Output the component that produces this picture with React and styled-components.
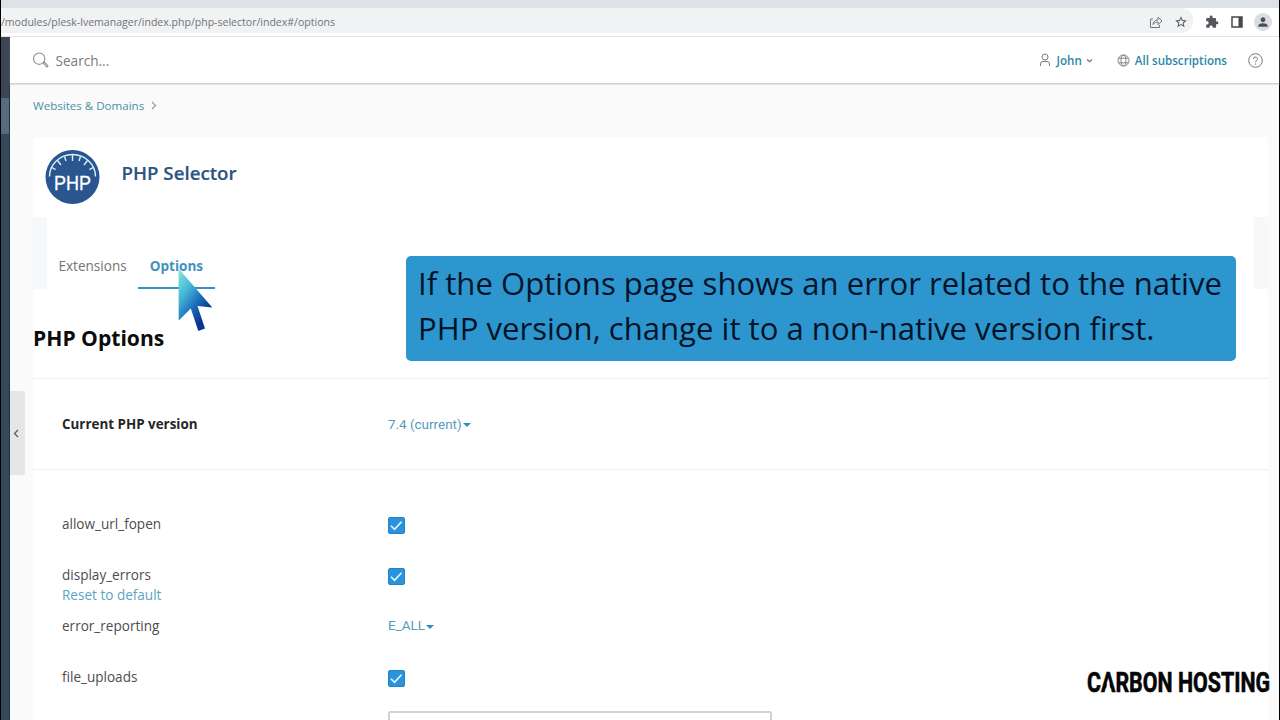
import { useState } from "react";
import styled, { createGlobalStyle } from "styled-components";
import { MdExtension, MdPerson, MdStarBorder } from "react-icons/md";

const GlobalStyle = createGlobalStyle`
  * {
    box-sizing: border-box;
  }
  body {
    margin: 0;
    background-color: #000;
    font-family: "Open Sans", "Noto Sans", sans-serif;
  }
`

const Screen = styled.div`
  position: relative;
  width: 1280px;
  height: 720px;
  padding: 0 1px;
  overflow: hidden;
  display: flex;
  flex-direction: column;
  background-color: #000;
`

const TabStrip = styled.div`
  height: 8px;
  background-color: #dee1e6;
`

const BrowserBar = styled.div`
  height: 29px;
  display: flex;
  align-items: flex-start;
  background-color: #fff;
  border-bottom: 1px solid #e4e5e7;
  color: #54575b;
`

const AddressBar = styled.div`
  width: 1192px;
  height: 25px;
  padding-top: 3px;
  display: flex;
  align-items: center;
  background-color: #f0f2f3;
  border-radius: 0 12px 12px 0;
  & > span {
    flex: 1;
    font-size: 10.54px;
    line-height: 20px;
    color: #707276;
  }
`

const BarIcon = styled.div`
  width: ${props => props.$width || 25}px;
  height: 28px;
  display: flex;
  align-items: center;
  justify-content: center;
`

const Avatar = styled.div`
  width: 18px;
  height: 18px;
  margin: 5px 0 0 10px;
  border-radius: 50%;
  display: flex;
  align-items: center;
  justify-content: center;
  background-color: #dadde3;
  color: #4a4e5c;
`

const Body = styled.div`
  flex: 1;
  min-height: 0;
  display: flex;
`

const Sidebar = styled.div`
  width: 9px;
  display: flex;
  flex-direction: column;
  background-color: #34495c;
  border-right: 1px solid #26323f;
`

const SidebarBlock = styled.div`
  height: ${props => props.$height}px;
  background-color: ${props => props.$color};
`

const Main = styled.div`
  flex: 1;
  min-width: 0;
  display: flex;
  flex-direction: column;
  background-color: #fafafa;
`

const TopBar = styled.div`
  height: 47px;
  flex: none;
  padding: 0 16px 0 23px;
  display: flex;
  align-items: center;
  background-color: #fff;
  border-bottom: 1px solid #d2d2d2;
  box-shadow: 0 1px 1px #e4e4e4;
  svg {
    display: block;
  }
`

const SearchText = styled.span`
  flex: 1;
  margin-left: 5.5px;
  font-size: 13.6px;
  color: #7b7b7b;
`

const TopLink = styled.a`
  margin: 0 ${props => props.$right}px 0 ${props => props.$left}px;
  font-size: 11.6px;
  font-weight: 600;
  color: #2a86a4;
`

const MenuGap = styled.span`
  width: 24px;
`

const Breadcrumb = styled.div`
  height: 53px;
  flex: none;
  padding: 0 0 10px 23px;
  display: flex;
  align-items: center;
  gap: 7px;
  font-size: 11.57px;
  color: #4a91a5;
`

const Card = styled.div`
  flex: 1;
  margin: 0 11px 0 23px;
  background-color: #fff;
`

const TitleRow = styled.div`
  height: 80px;
  padding: 13px 0 0 12px;
  display: flex;
  gap: 21.5px;
`

const Title = styled.h1`
  margin: 9px 0 0;
  font-size: 18.7px;
  line-height: 28px;
  font-weight: 600;
  color: #2b557f;
  -webkit-text-stroke: 0.2px #2b557f;
`

const Tabs = styled.div`
  height: 72px;
  padding: 0 14px;
  display: flex;
  align-items: flex-end;
  background: linear-gradient(#f6f8fa, #f6f8fa) left / 14px 100% no-repeat,
    linear-gradient(#f6f8fa, #f6f8fa) right / 14px 100% no-repeat;
`

const Tab = styled.div`
  height: 34px;
  padding: 0 11.5px;
  font-size: 13.55px;
  line-height: 23px;
  font-weight: ${props => props.$active ? 700 : 400};
  color: ${props => props.$active ? "#4390bf" : "#747474"};
  border-bottom: 2px solid ${props => props.$active ? "#3c8ebf" : "transparent"};
`

const SectionTitle = styled.h2`
  height: 90px;
  margin: 0;
  padding-top: 34px;
  font-size: 21.1px;
  line-height: 30px;
  font-weight: 700;
  color: #0c0c0c;
  border-bottom: 1px solid #f1f1f1;
`

const VersionRow = styled.div`
  height: 91px;
  padding-left: 29px;
  display: flex;
  align-items: center;
  border-bottom: 1px solid #f1f1f1;
`

const VersionLabel = styled.div`
  width: 326px;
  font-size: 13.4px;
  font-weight: 700;
  color: #262626;
`

const Select = styled.div`
  display: flex;
  align-items: center;
  gap: 1.5px;
  font-family: Roboto, sans-serif;
  font-size: 13.45px;
  line-height: 19px;
  color: #559bbd;
  &::after {
    content: "";
    border: 4px solid transparent;
    border-top-color: #348fc0;
    border-bottom: 0;
    margin-top: 2px;
  }
`

const OptionList = styled.div`
  padding: 37px 0 0 29px;
`

const OptionRow = styled.div`
  height: 51px;
  padding-top: 7px;
  display: flex;
  align-items: flex-start;
`

const OptionLabel = styled.div`
  width: 326px;
  font-size: 13.55px;
  line-height: 20px;
  color: #4d4d4d;
  & > a {
    display: block;
    color: #5ba5bf;
  }
`

const Check = styled.button`
  width: 17px;
  height: 17px;
  margin-top: 3px;
  padding: 0;
  border: 1px solid #2483c8;
  border-radius: 2px;
  background-color: ${props => props.$on ? "#2b93dc" : "#fff"};
  svg {
    display: block;
  }
`

const TextInp = styled.input`
  width: 384px;
  height: 34px;
  margin: -7px 0 0 326px;
  border: 2px solid #d2d2d2;
  border-radius: 2px;
  outline: none;
`

const Handle = styled.div`
  position: absolute;
  left: 10px;
  top: 391px;
  width: 15px;
  height: 84px;
  padding-right: 3px;
  display: flex;
  align-items: center;
  justify-content: center;
  background-color: #e6e6e6;
  border-radius: 0 2px 2px 0;
`

const Callout = styled.div`
  position: absolute;
  left: 406px;
  top: 256px;
  width: 830px;
  height: 105px;
  padding: 5px 0 0 12px;
  border-radius: 5px;
  background-color: #2d96cf;
  font-size: 31.12px;
  line-height: 44.5px;
  color: #031429;
  white-space: nowrap;
`

const Pointer = styled.svg`
  position: absolute;
  left: 176px;
  top: 266px;
`

const Brand = styled.div`
  position: absolute;
  left: 1087px;
  top: 666px;
  font-family: Roboto, sans-serif;
  font-size: 28px;
  line-height: 33px;
  font-weight: 700;
  color: #050505;
  -webkit-text-stroke: 0.6px #050505;
  white-space: nowrap;
  transform: scaleX(0.764);
  transform-origin: left;
`

// the wordmark's A has no crossbar, so the inside of the letter is filled in
const OpenA = styled.span`
  position: relative;
  &::after {
    content: "";
    position: absolute;
    left: 4.9px;
    bottom: 5px;
    width: 9.2px;
    height: 15px;
    background-color: #fff;
    clip-path: polygon(50% 0, 100% 100%, 0 100%);
  }
`

const options = [
  { name: "allow_url_fopen", type: "check" },
  { name: "display_errors", type: "check", reset: true },
  { name: "error_reporting", type: "select", value: "E_ALL" },
  { name: "file_uploads", type: "check" },
]

const PhpLogo = () => (
  <svg width="55" height="55" viewBox="0 0 55 55">
    <circle cx="27.500" cy="27" r="27" fill="#29568f" />
    <g fill="none" stroke="#d9f0fa" strokeWidth="1.400">
      <path d="M4.500 26.500a23 22 0 0 1 46 0" />
      <path d="M6.800 17.500l3.800 2.200M12.500 10.500l3.500 4.500M19.500 6.500l1.500 4.500M27.500 5v6M35.500 6.500l-1.500 4.500M42.500 10.500l-3.500 4.500M48.200 17.500l-3.800 2.200" />
    </g>
    <text x="27.500" y="40" textAnchor="middle" fontFamily="Liberation Sans, sans-serif" fontSize="20.500"
      textLength="37" lengthAdjust="spacingAndGlyphs" fill="#fff" stroke="#fff" strokeWidth="0.300">PHP</text>
  </svg>
)

const Chevron = ({ d, w, h, color }) => (
  <svg width={w} height={h} fill="none" stroke={color} strokeWidth="1.200">
    <path d={d} />
  </svg>
)

function OptionControl({ option }) {
  const [on, setOn] = useState(true)

  if (option.type === "select") return <Select>{option.value}</Select>
  return (
    <Check $on={on} onClick={() => setOn(!on)}>
      {on && (
        <svg width="15" height="15" fill="none" stroke="#e6fbff" strokeWidth="1.600">
          <path d="M2 7.800l3.500 3.500 7-7.500" />
        </svg>
      )}
    </Check>
  )
}

export default function App() {
  return (
    <>
      <GlobalStyle />
      <Screen>
        <TabStrip />
        <BrowserBar>
          <AddressBar>
            <span>/modules/plesk-lvemanager/index.php/php-selector/index#/options</span>
            <BarIcon>
              <svg width="14" height="14" fill="none" stroke="#73777b" strokeWidth="1">
                <path d="M4 4H1.500v8.500h9V10" />
                <path d="M4 9.500c.3-3 2-4.500 5-4.500V2.200L13 6 9 9.600V7C7 7 5.300 7.700 4 9.500z" />
              </svg>
            </BarIcon>
            <BarIcon><MdStarBorder size={14} /></BarIcon>
          </AddressBar>
          <BarIcon $width={37}><MdExtension size={14} /></BarIcon>
          <BarIcon $width={14}>
            <svg width="12" height="12">
              <path d="M1 1h10v10H1z" fill="none" stroke="#45484c" strokeWidth="1.500" />
              <path d="M7.500 1H11v10H7.500z" fill="#45484c" />
            </svg>
          </BarIcon>
          <Avatar><MdPerson size={14} /></Avatar>
        </BrowserBar>
        <Body>
          <Sidebar>
            <SidebarBlock $height={61} $color="#3d4655" />
            <SidebarBlock $height={36} $color="#566a80" />
          </Sidebar>
          <Main>
            <TopBar>
              <svg width="17" height="17" fill="none" stroke="#909090" strokeWidth="1.100">
                <circle cx="6.200" cy="6.700" r="5.700" />
                <path d="M10.200 11l1-1 3.600 3.600a.9.9 0 0 1-1.200 1.200z" />
              </svg>
              <SearchText>Search...</SearchText>
              <svg width="12" height="14" fill="none" stroke="#7d7d7d" strokeWidth="1">
                <circle cx="6" cy="4" r="3" />
                <path d="M1.500 13v-2q0-2.500 2.500-2.500h4q2.500 0 2.500 2.500v2" />
              </svg>
              <TopLink $left={6} $right={4}>John</TopLink>
              <Chevron d="M1 1.500l2.500 2.300 2.500-2.300" w={7} h={5} color="#777" />
              <MenuGap />
              <svg width="13" height="13" fill="none" stroke="#777" strokeWidth="0.900">
                <circle cx="6.500" cy="6.500" r="5.500" />
                <ellipse cx="6.500" cy="6.500" rx="2.500" ry="5.500" />
                <path d="M1.800 4.200h9.400M1.800 8.800h9.400" />
              </svg>
              <TopLink $left={5} $right={21}>All subscriptions</TopLink>
              <svg width="15" height="15" fill="none" stroke="#777">
                <circle cx="7.500" cy="7.500" r="6.800" />
                <path d="M5.500 6a2 2 0 1 1 3 1.700q-1 .6-1 1.500M7.500 10.400v1.200" />
              </svg>
            </TopBar>
            <Breadcrumb>
              Websites &amp; Domains
              <Chevron d="M1 1l3.500 3.500L1 8" w={6} h={9} color="#999" />
            </Breadcrumb>
            <Card>
              <TitleRow>
                <PhpLogo />
                <Title>PHP Selector</Title>
              </TitleRow>
              <Tabs>
                <Tab>Extensions</Tab>
                <Tab $active>Options</Tab>
              </Tabs>
              <SectionTitle>PHP Options</SectionTitle>
              <VersionRow>
                <VersionLabel>Current PHP version</VersionLabel>
                <Select>7.4 (current)</Select>
              </VersionRow>
              <OptionList>
                {options.map(option => (
                  <OptionRow key={option.name}>
                    <OptionLabel>
                      {option.name}
                      {option.reset && <a>Reset to default</a>}
                    </OptionLabel>
                    <OptionControl option={option} />
                  </OptionRow>
                ))}
                <OptionRow>
                  <TextInp type="text" />
                </OptionRow>
              </OptionList>
            </Card>
          </Main>
        </Body>
        <Handle><Chevron d="M5 1L1.500 4.500 5 8" w={6} h={9} color="#555" /></Handle>
        <Callout>
          If the Options page shows an error related to the native<br />
          PHP version, change it to a non-native version first.
        </Callout>
        <Pointer width="40" height="68">
          <defs>
            <linearGradient id="pointer" x1="0" y1="0" x2="0.750" y2="1">
              <stop offset="0" stopColor="#8be8e4" />
              <stop offset="0.350" stopColor="#43b4d6" />
              <stop offset="0.600" stopColor="#1c6fb8" />
              <stop offset="0.850" stopColor="#0d3591" />
            </linearGradient>
          </defs>
          <path d="M2.500 2.500L36.300 41.500 21.500 40 29 62.500 22.300 65 14.800 42.500 2.700 54.500z" fill="url(#pointer)" />
        </Pointer>
        <Brand>C<OpenA>A</OpenA>RBON HOSTING</Brand>
      </Screen>
    </>
  )
}
